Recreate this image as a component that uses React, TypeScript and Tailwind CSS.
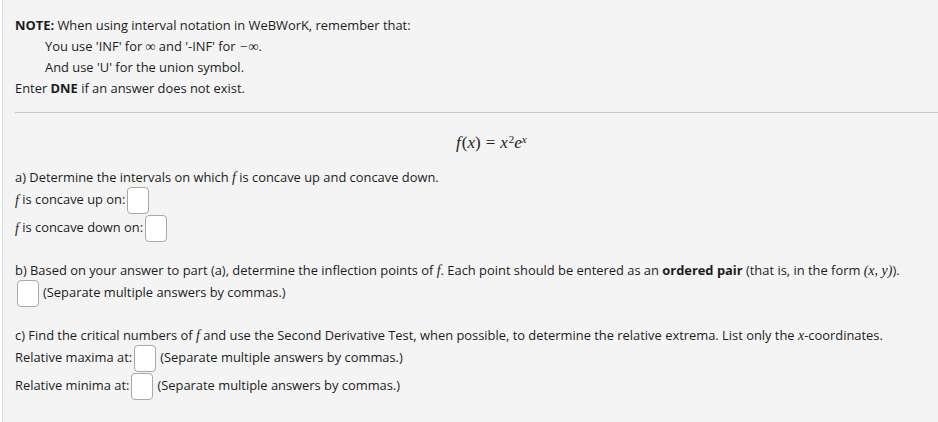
import React from "react";

const M = ({ children }: { children: React.ReactNode }) => (
  <span className="italic text-[14px]" style={{ fontFamily: '"Liberation Serif", "DejaVu Serif", serif' }}>
    {children}
  </span>
);

const Box = () => (
  <span className="inline-block w-[22px] h-[27px] align-middle bg-white border border-[#a8a8a8] rounded-[4px] mx-[2px]" />
);

export default function App() {
  return (
    <div className="w-[938px] h-[422px] bg-white pl-[2px] overflow-hidden">
      <div
        className="h-full bg-[#f4f4f4] border-l border-[#dcdcdc] pl-[12px] pt-[15px] text-[12.9px] text-[#1c1c1c] whitespace-nowrap"
        style={{ fontFamily: '"Open Sans", "Noto Sans", sans-serif' }}
      >
        <div className="leading-[20.5px]">
          <div><b>NOTE:</b> When using interval notation in WeBWorK, remember that:</div>
          <div className="pl-[30px]">
            You use 'INF' for <M>∞</M> and '-INF' for <M>−∞</M>.
          </div>
          <div className="pl-[30px]">And use 'U' for the union symbol.</div>
          <div>Enter <b>DNE</b> if an answer does not exist.</div>
        </div>
        <div className="mt-[14px] border-t border-[#c8c8c8]" />
        <div
          className="pt-[19px] pl-[441px] text-[17px] leading-[22px] text-[#222]"
          style={{ fontFamily: '"Liberation Serif", serif' }}
        >
          <i>f</i>
          <span className="ml-[1px]">(</span>
          <i>x</i>)<span className="mx-[5px]">=</span>
          <i>x</i>
          <sup className="text-[11px] ml-[1px]">2</sup>
          <i>e</i>
          <sup className="text-[11px] italic">x</sup>
        </div>
        <div className="mt-[15px] leading-[16px]">
          a) Determine the intervals on which <M>f</M> is concave up and concave down.
        </div>
        <div className="h-[28px] flex items-center">
          <M>f</M>&nbsp;is concave up on:<Box />
        </div>
        <div className="h-[28px] flex items-center">
          <M>f</M>&nbsp;is concave down on:<Box />
        </div>
        <div className="mt-[20px] leading-[16px]">
          b) Based on your answer to part (a), determine the inflection points of <M>f</M>. Each point should be
          entered as an <b>ordered pair</b> (that is, in the form <M>(x, y)</M>).
        </div>
        <div className="h-[28px] flex items-center">
          <Box />
          <span className="ml-[2px]">(Separate multiple answers by commas.)</span>
        </div>
        <div className="mt-[20px] leading-[16px]">
          c) Find the critical numbers of <M>f</M> and use the Second Derivative Test, when possible, to determine
          the relative extrema. List only the <M>x</M>-coordinates.
        </div>
        <div className="h-[28px] flex items-center">
          Relative maxima at:<Box />
          <span className="ml-[2px]">(Separate multiple answers by commas.)</span>
        </div>
        <div className="h-[28px] flex items-center">
          Relative minima at:<Box />
          <span className="ml-[2px]">(Separate multiple answers by commas.)</span>
        </div>
      </div>
    </div>
  );
}
